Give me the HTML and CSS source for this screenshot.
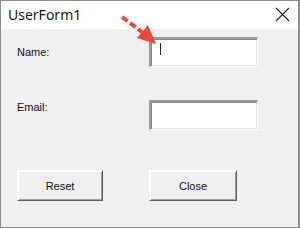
FILE: index.html
```html
<!DOCTYPE html>
<html lang="en">

<head>
    <meta charset="UTF-8">
    <title>UserForm1</title>
    <link rel="stylesheet" href="styles.css">
</head>

<body>

    <div class="window">
        <div class="titlebar">
            <span class="title">UserForm1</span>
            <svg class="close-x" width="15" height="15" viewBox="0 0 15 15">
                <path d="M1 1 L14 14 M14 1 L1 14" stroke="#222" stroke-width="1.1" fill="none" />
            </svg>
        </div>
        <div class="client">
            <div class="row">
                <label class="lbl" for="name">Name:</label>
                <div class="textbox" id="name"><span class="caret"></span></div>
            </div>
            <div class="row row-email">
                <label class="lbl" for="email">Email:</label>
                <div class="textbox" id="email"></div>
            </div>
            <div class="buttons">
                <button class="btn btn-reset">Reset</button>
                <button class="btn btn-close">Close</button>
            </div>
        </div>

        <svg class="pointer" width="300" height="228" viewBox="0 0 300 228">
            <line x1="122" y1="17" x2="142" y2="32" stroke="#e8473c" stroke-width="4" stroke-dasharray="7 3" />
            <polygon points="156,44 137,38 148,25" fill="#e8473c" />
        </svg>
    </div>

</body>

</html>
```

FILE: styles.css
```css
* {
    margin: 0;
    padding: 0;
    box-sizing: border-box;
}

body {
    font-family: "Liberation Sans", Arial, sans-serif;
    background: #ffffff;
}

.window {
    position: relative;
    width: 300px;
    height: 228px;
    border: 1px solid #8c8c8c;
    border-right-width: 2px;
    background: #f0f0f0;
}

.titlebar {
    height: 28px;
    background: #ffffff;
    display: flex;
    align-items: center;
    justify-content: space-between;
    padding: 0 8px 0 7px;
}

.title {
    font-family: "Noto Sans", "Open Sans", sans-serif;
    font-size: 14px;
    color: #1a1a1a;
    margin-top: -1px;
}

.close-x {
    display: block;
    margin-top: -1px;
}

.client {
    padding: 8px 0 0 16px;
}

.row {
    display: flex;
    align-items: center;
    height: 30px;
}

.row-email {
    margin-top: 33px;
    align-items: flex-start;
}

.row-email .lbl {
    margin-top: 1px;
}

.lbl {
    width: 132px;
    font-size: 11px;
    color: #111;
}

.textbox {
    width: 109px;
    height: 30px;
    background: #ffffff;
    border-style: solid;
    border-width: 2px 1px 1px 2px;
    border-color: #9a9a9a #ffffff #ffffff #9a9a9a;
    box-shadow: inset 1px 1px 0 #868686, inset -1px -1px 0 #e3e3e3;
    padding: 3px 0 0 9px;
}

.caret {
    display: block;
    width: 1px;
    height: 12px;
    margin-top: 1px;
    background: #222;
}

.buttons {
    display: flex;
    margin-top: 40px;
}

.btn {
    height: 31px;
    font-family: "Liberation Sans", Arial, sans-serif;
    font-size: 11px;
    color: #111;
    background: #f0f0f0;
    border: 1px solid;
    border-color: #ffffff #5a5a5a #5a5a5a #ffffff;
    box-shadow: inset 1px 1px 0 #ffffff, inset -1px -1px 0 #a0a0a0;
}

.btn-reset {
    width: 86px;
}

.btn-close {
    width: 88px;
    margin-left: 46px;
}

.pointer {
    position: absolute;
    left: -1px;
    top: -1px;
}
```
